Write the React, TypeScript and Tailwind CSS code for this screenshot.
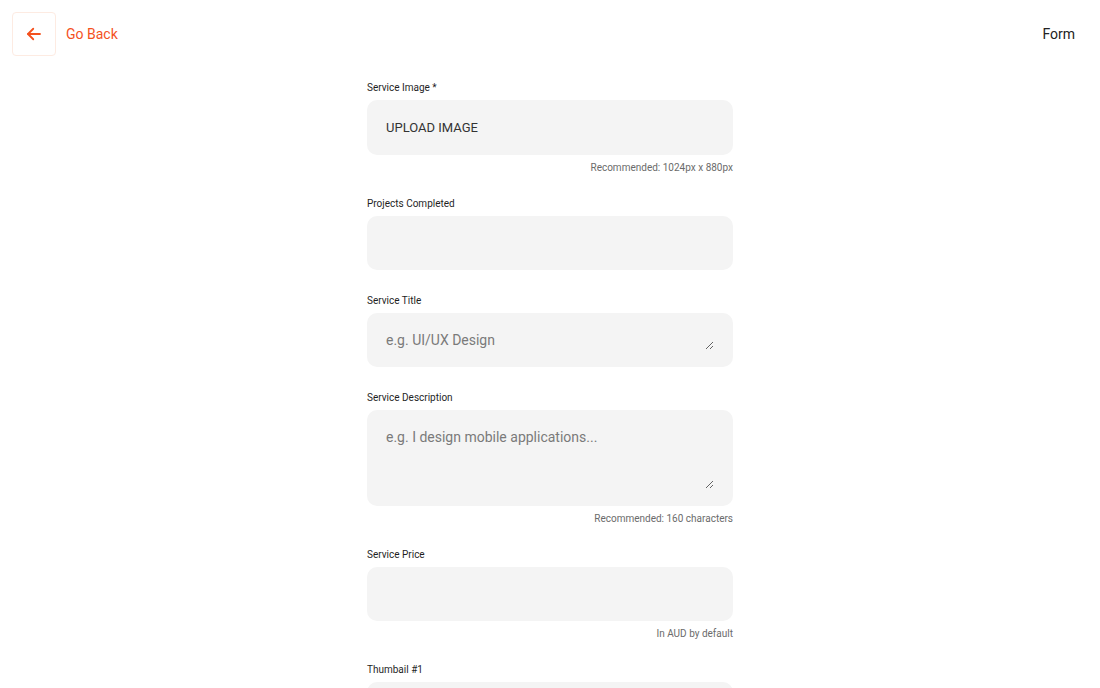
import React from 'react';

/**
 * ServiceForm - página de criação de serviço
 * Cabeçalho com "Go Back" e formulário centralizado
 */

interface FieldProps {
  label: string;
  hint?: string;
  children: React.ReactNode;
}

const Field: React.FC<FieldProps> = ({ label, hint, children }) => (
  <div className={`flex flex-col ${hint ? 'mb-[23px]' : 'mb-[24px]'}`}>
    <label className="text-[10px] leading-[14px] text-[#1f1f1f] mb-[5px]">{label}</label>
    {children}
    {hint && (
      <p className="text-[10px] leading-[13px] text-[#6b6b6b] text-right mt-[6px]">{hint}</p>
    )}
  </div>
);

const boxClass =
  'w-full rounded-[10px] bg-[#f4f4f4] px-[19px] text-[#333] placeholder:text-[#7a7a7a] outline-none';

const areaClass =
  'block w-full bg-transparent text-[14px] leading-[20px] text-[#333] placeholder:text-[#7a7a7a] outline-none resize-y';

const App: React.FC = () => {
  const [title, setTitle] = React.useState('');
  const [description, setDescription] = React.useState('');
  const [price, setPrice] = React.useState('');
  const [projects, setProjects] = React.useState('');

  return (
    <div className="min-h-screen bg-white" style={{ fontFamily: 'Roboto, "Liberation Sans", sans-serif' }}>
      <header className="flex items-center justify-between pl-[12px] pr-[25px] pt-[12px]">
        <button className="flex items-center gap-[10px] text-[#f4511e]">
          <span className="flex h-[44px] w-[44px] items-center justify-center rounded-[4px] border border-[#fdebe2]">
            <svg width="18" height="18" viewBox="0 0 24 24" fill="none" stroke="currentColor" strokeWidth="2.4" strokeLinecap="round" strokeLinejoin="round">
              <path d="M20 12H4" />
              <path d="M11 5l-7 7 7 7" />
            </svg>
          </span>
          <span className="text-[14px]">Go Back</span>
        </button>
        <span className="text-[14px] text-[#222]">Form</span>
      </header>

      <form className="mx-auto mt-[25px] flex w-[366px] flex-col">
        <Field label="Service Image *" hint="Recommended: 1024px x 880px">
          <button type="button" className={`${boxClass} h-[55px] text-left text-[13px]`}>
            UPLOAD IMAGE
          </button>
        </Field>

        <Field label="Projects Completed">
          <input
            className={`${boxClass} h-[54px] text-[14px]`}
            value={projects}
            onChange={(e) => setProjects(e.target.value)}
          />
        </Field>

        <Field label="Service Title">
          <div className="rounded-[10px] bg-[#f4f4f4] px-[19px] py-[17px]">
            <textarea
              rows={1}
              className={`${areaClass} h-[20px]`}
              placeholder="e.g. UI/UX Design"
              value={title}
              onChange={(e) => setTitle(e.target.value)}
            />
          </div>
        </Field>

        <Field label="Service Description" hint="Recommended: 160 characters">
          <div className="rounded-[10px] bg-[#f4f4f4] px-[19px] py-[17px]">
            <textarea
              className={`${areaClass} h-[62px]`}
              placeholder="e.g. I design mobile applications..."
              value={description}
              onChange={(e) => setDescription(e.target.value)}
            />
          </div>
        </Field>

        <Field label="Service Price" hint="In AUD by default">
          <input
            className={`${boxClass} h-[54px] text-[14px]`}
            value={price}
            onChange={(e) => setPrice(e.target.value)}
          />
        </Field>

        <Field label="Thumbail #1">
          <button type="button" className={`${boxClass} h-[55px] text-left text-[14px]`} />
        </Field>
      </form>
    </div>
  );
};

export default App;
